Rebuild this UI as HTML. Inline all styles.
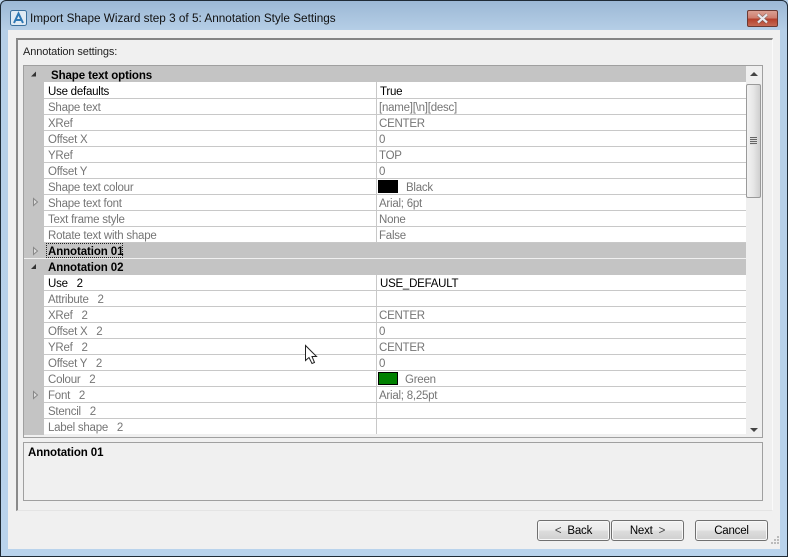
<!DOCTYPE html>
<html><head><meta charset="utf-8"><style>
html,body{margin:0;padding:0;background:#b9d3ec}
body{width:788px;height:557px;position:relative;overflow:hidden;font-family:"Liberation Sans",sans-serif;font-size:11.5px;letter-spacing:-.24px;color:#000}
div{position:absolute;box-sizing:border-box}
.t{white-space:pre;line-height:16px;height:16px;margin-top:1px}
.g{color:#757575}
.rl{left:44px;width:702px;height:1px;background:#c8c8c8}
.hd{left:24px;width:722px;height:16px;background:#c4c4c4}
.w{left:44px;width:702px;background:#fff}
.b{font-weight:bold;font-size:11.5px;letter-spacing:-.1px}
.btn{top:520px;width:73px;height:21px;border:1px solid #707070;border-radius:3px;background:linear-gradient(#f2f2f2 0,#ebebeb 48%,#dddddd 52%,#cfcfcf 100%);box-shadow:inset 0 0 0 1px #f8f8f8;text-align:center;line-height:20px;font-size:11.5px;letter-spacing:-.2px;color:#000}
</style></head><body>
<div style="left:0;top:0;width:788px;height:557px;border:1px solid #1f2b36;border-radius:6px 6px 0 0;background:linear-gradient(#9cb8d5 0,#b6cfe7 30px,#b9d3ec 100%)"></div>
<div style="left:8px;top:30px;width:772px;height:519px;background:#f0f0f0"></div>
<svg style="position:absolute;left:10px;top:10px" width="17" height="17"><rect x=".5" y=".5" width="16" height="15" rx="2" fill="#dfeaf4" stroke="#3a6f9c"/><path d="M4 13L8.500 3.500L13 13M6 10H11" fill="none" stroke="#2f78b4" stroke-width="2"/></svg>
<div class="t" style="left:30px;top:10px;font-size:11.75px;letter-spacing:0;color:#111">Import Shape Wizard step 3 of 5: Annotation Style Settings</div>
<div style="left:747px;top:10px;width:31px;height:17px;border:1px solid #6b3a33;border-radius:2px;background:linear-gradient(#dba093 0,#cf7f70 45%,#b5412c 55%,#c56a55 100%)"></div>
<svg style="position:absolute;left:755px;top:13px" width="15" height="11"><path d="M3 1.500L12 9.500M12 1.500L3 9.500" stroke="#555" stroke-width="3.500" opacity=".6"/><path d="M3 1.500L12 9.500M12 1.500L3 9.500" stroke="#e9e9ee" stroke-width="2.200"/></svg>

<div style="left:16px;top:38px;width:757px;height:473px;border-left:2px solid #8a8a8a;border-top:2px solid #858585;border-right:1px solid #fafafa;border-bottom:1px solid #e4e4e4"></div>
<div class="t" style="left:23px;top:43px;font-size:11px;letter-spacing:-.12px;color:#222">Annotation settings:</div>

<div style="left:23px;top:65px;width:740px;height:373px;border:1px solid #a0a0a0;background:#f0f0f0"></div>
<div style="left:24px;top:66px;width:20px;height:369px;background:#c4c4c4"></div>
<div class="w" style="top:82px;height:353px"></div>
<div class="hd" style="top:66px"></div>
<div class="hd" style="top:243px"></div>
<div class="hd" style="top:259px"></div>
<div style="left:376px;top:82px;width:1px;height:161px;background:#c8c8c8"></div>
<div style="left:376px;top:275px;width:1px;height:160px;background:#c8c8c8"></div>
<div class="rl" style="top:98px"></div><div class="rl" style="top:114px"></div><div class="rl" style="top:130px"></div><div class="rl" style="top:146px"></div><div class="rl" style="top:162px"></div><div class="rl" style="top:178px"></div><div class="rl" style="top:194px"></div><div class="rl" style="top:210px"></div><div class="rl" style="top:226px"></div>
<div class="rl" style="top:242px"></div><div class="rl" style="top:258px;left:24px;width:722px;background:#f0f0f0"></div>
<div class="rl" style="top:290px"></div><div class="rl" style="top:306px"></div><div class="rl" style="top:322px"></div><div class="rl" style="top:338px"></div><div class="rl" style="top:354px"></div><div class="rl" style="top:370px"></div><div class="rl" style="top:386px"></div><div class="rl" style="top:402px"></div><div class="rl" style="top:418px"></div>
<div style="left:44px;top:434px;width:702px;height:3px;background:#f0f0f0"></div>

<div class="t b" style="left:51px;top:67px">Shape text options</div>
<div class="t" style="left:48px;top:83px">Use defaults</div><div class="t" style="left:380px;top:83px">True</div>
<div class="t g" style="left:48px;top:99px">Shape text</div><div class="t g" style="left:379px;top:99px">[name][\n][desc]</div>
<div class="t g" style="left:48px;top:115px">XRef</div><div class="t g" style="left:379px;top:115px">CENTER</div>
<div class="t g" style="left:48px;top:131px">Offset X</div><div class="t g" style="left:379px;top:131px">0</div>
<div class="t g" style="left:48px;top:147px">YRef</div><div class="t g" style="left:379px;top:147px">TOP</div>
<div class="t g" style="left:48px;top:163px">Offset Y</div><div class="t g" style="left:379px;top:163px">0</div>
<div class="t g" style="left:48px;top:179px">Shape text colour</div><div style="left:378px;top:180px;width:20px;height:13px;background:#000"></div><div class="t g" style="left:406px;top:179px">Black</div>
<div class="t g" style="left:48px;top:195px">Shape text font</div><div class="t g" style="left:379px;top:195px">Arial; 6pt</div>
<div class="t g" style="left:48px;top:211px">Text frame style</div><div class="t g" style="left:379px;top:211px">None</div>
<div class="t g" style="left:48px;top:227px">Rotate text with shape</div><div class="t g" style="left:379px;top:227px">False</div>
<div style="left:46px;top:243px;width:77px;height:15px;border:1px dotted #222"></div>
<div class="t b" style="left:48px;top:243px">Annotation 01</div>
<div class="t b" style="left:48px;top:259px">Annotation 02</div>
<div class="t" style="left:48px;top:275px">Use   2</div><div class="t" style="left:380px;top:275px">USE_DEFAULT</div>
<div class="t g" style="left:48px;top:291px">Attribute   2</div>
<div class="t g" style="left:48px;top:307px">XRef   2</div><div class="t g" style="left:379px;top:307px">CENTER</div>
<div class="t g" style="left:48px;top:323px">Offset X   2</div><div class="t g" style="left:379px;top:323px">0</div>
<div class="t g" style="left:48px;top:339px">YRef   2</div><div class="t g" style="left:379px;top:339px">CENTER</div>
<div class="t g" style="left:48px;top:355px">Offset Y   2</div><div class="t g" style="left:379px;top:355px">0</div>
<div class="t g" style="left:48px;top:371px">Colour   2</div><div style="left:378px;top:372px;width:20px;height:13px;background:#008000;border:1px solid #000"></div><div class="t g" style="left:405px;top:371px">Green</div>
<div class="t g" style="left:48px;top:387px">Font   2</div><div class="t g" style="left:379px;top:387px">Arial; 8,25pt</div>
<div class="t g" style="left:48px;top:403px">Stencil   2</div>
<div class="t g" style="left:48px;top:419px">Label shape   2</div>

<svg style="position:absolute;left:24px;top:66px" width="20" height="369">
<path d="M12 5.500V10.500H7Z" fill="#333"/>
<path d="M9.500 132.500L13.500 136L9.500 139.500Z" fill="#ddd" stroke="#888"/>
<path d="M9.500 181.500L13.500 185L9.500 188.500Z" fill="#ddd" stroke="#888"/>
<path d="M9.500 325.500L13.500 329L9.500 332.500Z" fill="#ddd" stroke="#888"/>
</svg>
<svg style="position:absolute;left:24px;top:243px" width="20" height="32">
<path d="M12 21V26H7Z" fill="#333"/>
</svg>

<div style="left:746px;top:66px;width:16px;height:371px;background:#efefef"></div>
<svg style="position:absolute;left:750px;top:71px" width="9" height="6"><path d="M0 5H8L4 1Z" fill="#444"/></svg>
<svg style="position:absolute;left:750px;top:427px" width="9" height="6"><path d="M0 1H8L4 5Z" fill="#444"/></svg>
<div style="left:746px;top:84px;width:15px;height:114px;border:1px solid #9a9a9a;border-radius:2px;background:linear-gradient(90deg,#f2f2f2,#e6e6e6 50%,#cfcfcf)"></div>
<div style="left:750px;top:137px;width:7px;height:8px;background:repeating-linear-gradient(#666 0,#666 1px,#ddd 1px,#ddd 2px)"></div>

<div style="left:23px;top:442px;width:740px;height:59px;border:1px solid #a0a0a0;background:#f0f0f0"></div>
<div class="t b" style="left:28px;top:444px">Annotation 01</div>

<div class="btn" style="left:537px"><span style="color:#444">&lt;</span>&nbsp; Back</div>
<div class="btn" style="left:611px">Next &nbsp;<span style="color:#444">&gt;</span></div>
<div class="btn" style="left:695px">Cancel</div>
<svg style="position:absolute;left:770px;top:535px" width="10" height="12"><path d="M7 1h2v2H7zM4 4h2v2H4zM7 4h2v2H7zM1 7h2v2H1zM4 7h2v2H4zM7 7h2v2H7z" fill="#bbb"/></svg>

<svg style="position:absolute;left:304px;top:344px" width="16" height="22"><path d="M1.500 1.500V16.500L5 13.500L8 19.500L10.500 18.500L8 12.500H12.500Z" fill="#fff" stroke="#222"/></svg>
</body></html>
